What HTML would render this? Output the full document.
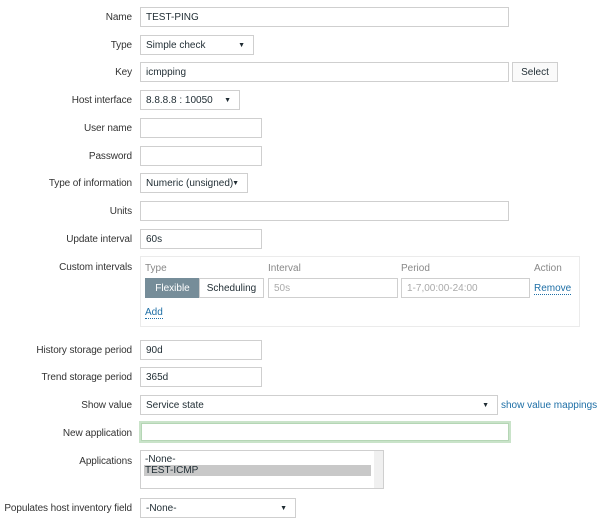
<!DOCTYPE html><html><head><style>
body{margin:0;width:600px;height:524px;background:#fff;font-family:"Liberation Sans",Arial,sans-serif;font-size:10px;color:#1f2c33;position:relative;overflow:hidden}
.l{position:absolute;right:468px;text-align:right;white-space:nowrap;color:#333;letter-spacing:-0.1px}
.i{position:absolute;box-sizing:border-box;border:1px solid #cfcfcf;background:#fff;padding:1px 5px 0;line-height:18px;height:20px;white-space:nowrap;color:#1f2c33}
.s::after{content:"▼";position:absolute;right:8px;top:1px;font-size:7px}
a{color:#1e6fa6;text-decoration:none;border-bottom:1px dotted #1e6fa6}
.h{position:absolute;color:#888;top:263px}
</style></head><body>
<div class="l" style="top:12px">Name</div><div class="i" style="left:140px;top:7px;width:369px">TEST-PING</div>
<div class="l" style="top:40px">Type</div><div class="i s" style="left:140px;top:35px;width:114px">Simple check</div>
<div class="l" style="top:67px">Key</div><div class="i" style="left:140px;top:62px;width:369px">icmpping</div>
<div class="i" style="left:512px;top:62px;width:46px;text-align:center;padding:1px 0 0;background:#fafafa">Select</div>
<div class="l" style="top:95px">Host interface</div><div class="i s" style="left:140px;top:90px;width:100px">8.8.8.8 : 10050</div>
<div class="l" style="top:123px">User name</div><div class="i" style="left:140px;top:118px;width:122px"></div>
<div class="l" style="top:151px">Password</div><div class="i" style="left:140px;top:146px;width:122px"></div>
<div class="l" style="top:178px">Type of information</div><div class="i s" style="left:140px;top:173px;width:108px">Numeric (unsigned)</div>
<div class="l" style="top:206px">Units</div><div class="i" style="left:140px;top:201px;width:369px"></div>
<div class="l" style="top:234px">Update interval</div><div class="i" style="left:140px;top:229px;width:122px">60s</div>
<div class="l" style="top:262px">Custom intervals</div>
<div style="position:absolute;left:140px;top:256px;width:440px;height:71px;box-sizing:border-box;border:1px solid #ebebeb"></div>
<div class="h" style="left:145px">Type</div><div class="h" style="left:268px">Interval</div><div class="h" style="left:401px">Period</div><div class="h" style="left:534px">Action</div>
<div class="i" style="left:145px;top:278px;width:55px;background:#768d99;border-color:#768d99;color:#fff;text-align:center;padding:1px 0 0">Flexible</div>
<div class="i" style="left:199px;top:278px;width:65px;text-align:center;padding:1px 0 0">Scheduling</div>
<div class="i" style="left:268px;top:278px;width:130px;color:#aaa">50s</div>
<div class="i" style="left:401px;top:278px;width:129px;color:#aaa">1-7,00:00-24:00</div>
<div style="position:absolute;left:534px;top:283px"><a>Remove</a></div>
<div style="position:absolute;left:145px;top:307px"><a>Add</a></div>
<div class="l" style="top:345px">History storage period</div><div class="i" style="left:140px;top:340px;width:122px">90d</div>
<div class="l" style="top:372px">Trend storage period</div><div class="i" style="left:140px;top:367px;width:122px">365d</div>
<div class="l" style="top:400px">Show value</div><div class="i s" style="left:140px;top:395px;width:358px">Service state</div>
<div style="position:absolute;left:501px;top:400px;color:#1e6fa6;white-space:nowrap">show value mappings</div>
<div class="l" style="top:428px">New application</div><div class="i" style="left:139px;top:421px;width:372px;height:22px;border:2px solid #c9e3c9;box-shadow:inset 0 0 0 1px #b5d6b5"></div>
<div class="l" style="top:456px">Applications</div>
<div class="i" style="left:140px;top:450px;width:244px;height:39px;padding:3px 4px;line-height:11px">-None-<div style="background:#c8c8c8;width:226px;margin-left:-1px;padding-left:1px">TEST-ICMP</div></div>
<div style="position:absolute;left:374px;top:451px;width:9px;height:37px;background:#f0f0f0"></div>
<div class="l" style="top:503px">Populates host inventory field</div><div class="i s" style="left:140px;top:498px;width:156px">-None-</div>
</body></html>
